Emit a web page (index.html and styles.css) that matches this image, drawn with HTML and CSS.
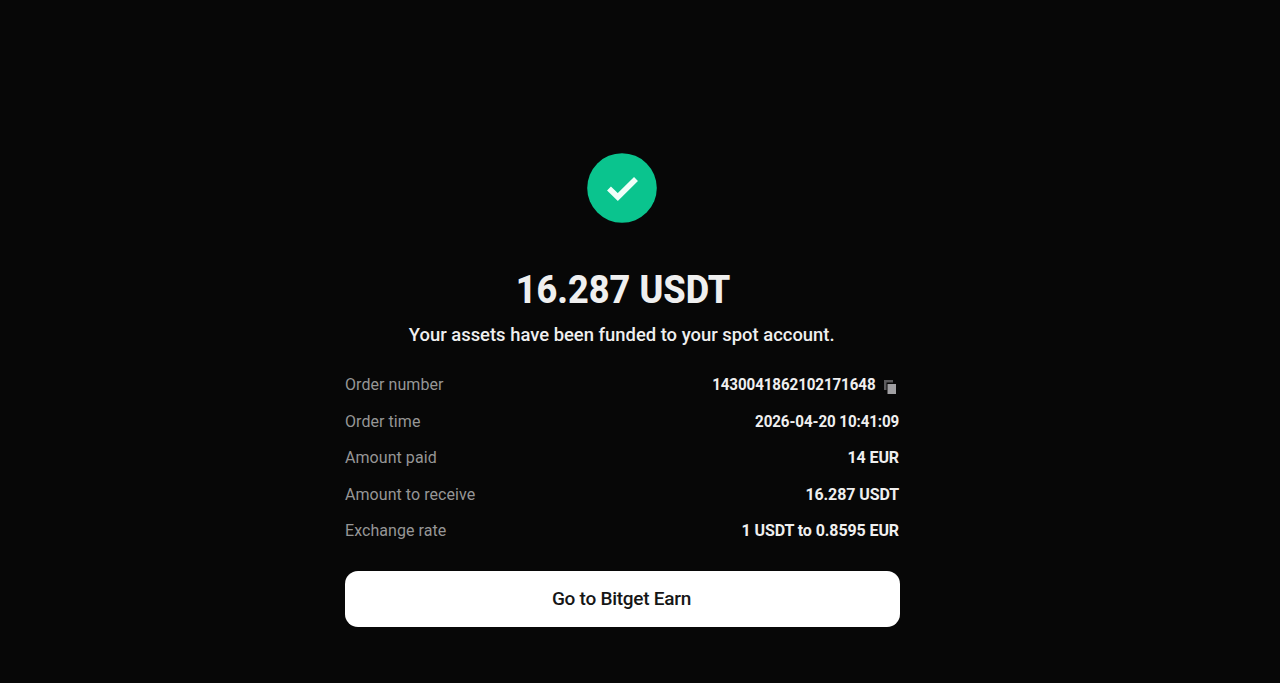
FILE: index.html
```
<!DOCTYPE html>
<html lang="en">
  <head>
    <meta charset="UTF-8" />
    <meta name="viewport" content="width=device-width, initial-scale=1" />
    <title>Order completed</title>
    <link rel="stylesheet" href="styles.css">
  </head>
  <body>
    <main class="container">
      <svg class="success-icon" viewBox="0 0 70 70" aria-hidden="true">
        <circle cx="35" cy="35" r="34.8" fill="#0ac48e" />
        <path d="M22 35.5l8.8 8.5L49 26" fill="none" stroke="#effff9" stroke-width="5.6" />
      </svg>
      <h1>16.287 USDT</h1>
      <p class="message">Your assets have been funded to your spot account.</p>

      <dl class="details">
        <div class="row">
          <dt>Order number</dt>
          <dd class="order-number">
            <span class="narrow">1430041862102171648</span>
            <svg class="copy-icon" viewBox="0 0 14 16" aria-hidden="true">
              <path d="M1 11V1h9v2.5H3.5V11z" fill="#5c5b5d" />
              <path d="M4.5 5H13v10H4.5z" fill="#a09fa2" />
            </svg>
          </dd>
        </div>
        <div class="row">
          <dt>Order time</dt>
          <dd class="narrow">2026-04-20 10:41:09</dd>
        </div>
        <div class="row">
          <dt>Amount paid</dt>
          <dd>14 EUR</dd>
        </div>
        <div class="row">
          <dt>Amount to receive</dt>
          <dd>16.287 USDT</dd>
        </div>
        <div class="row">
          <dt>Exchange rate</dt>
          <dd>1 USDT to 0.8595 EUR</dd>
        </div>
      </dl>

      <button type="button">Go to Bitget Earn</button>
    </main>
  </body>
</html>
```
FILE: styles.css
```
body {
  margin: 0;
  background: #070707;
  color: #efefef;
  font-family: Roboto, Arial, sans-serif;
}
.container {
  display: flex;
  flex-direction: column;
  align-items: center;
  width: 555px;
  margin-left: 345px;
  padding-top: 152.5px;
}
.success-icon {
  width: 70px;
  height: 70px;
  margin-right: 1px;
}
h1 {
  margin: 44.5px 0 0;
  font-size: 39px;
  line-height: 46px;
  font-weight: 800;
  transform: scaleX(0.925);
}
.message {
  margin: 10px 2px 0 0;
  font-size: 19px;
  line-height: 24px;
  font-weight: 500;
  transform: scaleX(0.969);
}
.details {
  width: 100%;
  margin: 19.25px 0 0;
}
.row {
  display: flex;
  justify-content: space-between;
  align-items: center;
  height: 36.5px;
  padding-right: 1px;
  font-size: 16px;
}
dt {
  color: #969696;
  letter-spacing: 0.06px;
}
dd {
  margin: 0;
  font-weight: 700;
  letter-spacing: -0.1px;
}
.order-number {
  display: flex;
  align-items: center;
}
.narrow {
  transform: scaleX(0.947);
  transform-origin: right;
}
.copy-icon {
  width: 14px;
  height: 16px;
  margin: 4px 2px 0 7px;
}
button {
  width: 100%;
  height: 56px;
  margin-top: 21.75px;
  padding: 0 2px 0 0;
  border: 0;
  border-radius: 13px;
  background: #fff;
  color: #161616;
  font-family: inherit;
  font-size: 19px;
  font-weight: 500;
  letter-spacing: -0.25px;
}
```
